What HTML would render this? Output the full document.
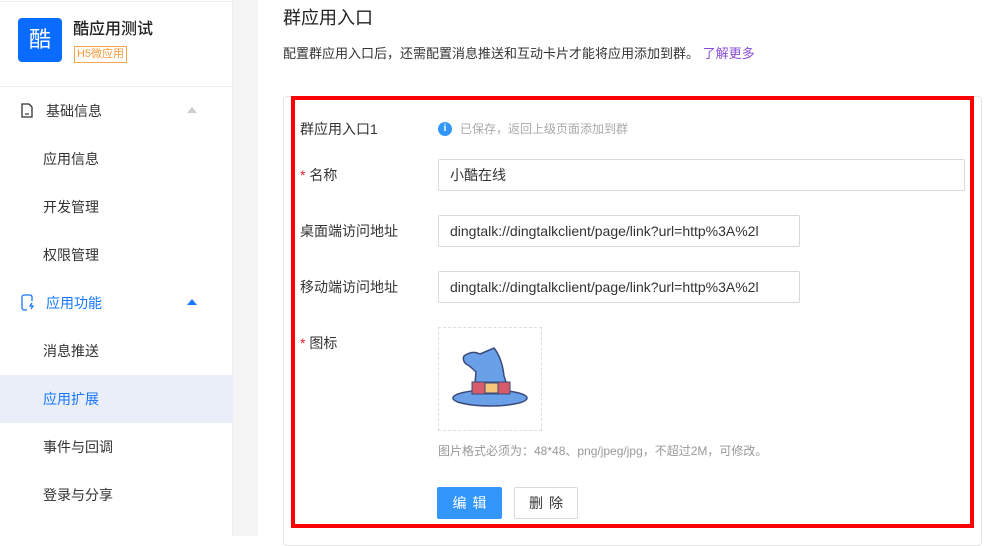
<!DOCTYPE html>
<html><head><meta charset="utf-8"><style>
*{margin:0;padding:0;box-sizing:border-box}
body{width:1005px;height:536px;overflow:hidden;background:#fff;font-family:"Liberation Sans","Noto Sans CJK SC",sans-serif;color:#333;position:relative}
.a{position:absolute}
.side{left:0;top:0;width:233px;height:536px;background:#fff;border-right:1px solid #eee}
.gap{left:233px;top:0;width:25px;height:536px;background:#f5f5f6}
.mi{left:43px;font-size:14px;color:#333;line-height:16px}
.inp{border:1px solid #d9d9d9;border-radius:2px;height:32px;font-size:14px;color:#333;padding-left:11px;line-height:30px;white-space:nowrap;overflow:hidden}
.lab{left:300px;font-size:14px;color:#333;line-height:16px}
.req{color:#f5222d}
</style></head><body>
<div class="a side"></div>
<div class="a gap"></div>
<div class="a" style="left:0;top:1px;width:233px;height:1px;background:#eee"></div>
<div class="a" style="left:0;top:86px;width:233px;height:1px;background:#eee"></div>
<div class="a" style="left:18px;top:18px;width:44px;height:44px;background:#0a6cff;border-radius:4px;color:#fff;font-size:22px;text-align:center;line-height:44px">酷</div>
<div class="a" style="left:73px;top:20px;font-size:16px;color:#222;font-weight:500;line-height:20px">酷应用测试</div>
<div class="a" style="left:74px;top:46px;width:53px;height:17px;border:1px solid #f5a54a;color:#f29a3b;font-size:11px;line-height:15px;text-align:center">H5微应用</div>

<svg class="a" style="left:21px;top:103px" width="12" height="15" viewBox="0 0 12 15"><path d="M1 1h7l3 3v10H1z" fill="none" stroke="#333" stroke-width="1.3"/><path d="M4 11h4" stroke="#333" stroke-width="1.2"/></svg>
<div class="a mi" style="left:46px;top:103px">基础信息</div>
<div class="a" style="left:187px;top:107px;width:0;height:0;border-left:5px solid transparent;border-right:5px solid transparent;border-bottom:6px solid #ccc"></div>
<div class="a mi" style="top:151px">应用信息</div>
<div class="a mi" style="top:199px">开发管理</div>
<div class="a mi" style="top:247px">权限管理</div>
<svg class="a" style="left:21px;top:294px" width="14" height="17" viewBox="0 0 14 17"><path d="M9 1H3a2 2 0 0 0-2 2v11a2 2 0 0 0 2 2h3M11 7V3a2 2 0 0 0-2-2" fill="none" stroke="#1677ff" stroke-width="1.3"/><path d="M11 9l-2 3h3l-2 3" fill="none" stroke="#1677ff" stroke-width="1.3"/></svg>
<div class="a mi" style="left:46px;top:295px;color:#1677ff">应用功能</div>
<div class="a" style="left:187px;top:299px;width:0;height:0;border-left:5px solid transparent;border-right:5px solid transparent;border-bottom:6px solid #1677ff"></div>
<div class="a mi" style="top:343px">消息推送</div>
<div class="a" style="left:0;top:375px;width:233px;height:48px;background:#e9eef9"></div>
<div class="a mi" style="top:391px;color:#1677ff">应用扩展</div>
<div class="a mi" style="top:439px">事件与回调</div>
<div class="a mi" style="top:487px">登录与分享</div>

<div class="a" style="left:283px;top:7px;font-size:18px;color:#222;line-height:22px">群应用入口</div>
<div class="a" style="left:283px;top:46px;font-size:13px;color:#333;line-height:16px">配置群应用入口后，还需配置消息推送和互动卡片才能将应用添加到群。 <span style="color:#8a4fd6">了解更多</span></div>

<div class="a" style="left:283px;top:96px;width:699px;height:450px;border:1px solid #e5e5e5;border-radius:4px"></div>
<div class="a" style="left:291px;top:96px;width:683px;height:432px;border:4px solid #ff0000"></div>

<div class="a lab" style="top:121px">群应用入口1</div>
<div class="a" style="left:438px;top:122px;width:14px;height:14px;border-radius:50%;background:#3296fa;color:#fff;font-size:10px;text-align:center;line-height:14px;font-weight:bold">i</div>
<div class="a" style="left:460px;top:121px;font-size:12px;color:#aaa;line-height:16px">已保存，返回上级页面添加到群</div>
<div class="a lab" style="top:167px"><span class="req">*</span> 名称</div>
<div class="a inp" style="left:438px;top:159px;width:527px">小酷在线</div>
<div class="a lab" style="top:223px">桌面端访问地址</div>
<div class="a inp" style="left:438px;top:215px;width:362px">dingtalk://dingtalkclient/page/link?url=http%3A%2l</div>
<div class="a lab" style="top:279px">移动端访问地址</div>
<div class="a inp" style="left:438px;top:271px;width:362px">dingtalk://dingtalkclient/page/link?url=http%3A%2l</div>
<div class="a lab" style="top:335px"><span class="req">*</span> 图标</div>
<div class="a" style="left:438px;top:327px;width:104px;height:104px;border:1px dashed #ddd"></div>
<svg class="a" style="left:452px;top:346px" width="78" height="66" viewBox="0 0 78 66">
<path d="M12 10 Q20 4 28 8 L42 2 Q50 12 52 30 L58 48 L22 48 L24 26 Q18 20 14 18 Q10 14 12 10Z" fill="#6aa0e8" stroke="#3a4a7a" stroke-width="1.5"/>
<ellipse cx="38" cy="52" rx="37" ry="8" fill="#6aa0e8" stroke="#3a4a7a" stroke-width="1.5"/>
<rect x="20" y="36" width="38" height="12" fill="#d95a6a" stroke="#3a4a7a" stroke-width="1"/>
<rect x="33" y="37" width="13" height="10" fill="#f5c57a" stroke="#3a4a7a" stroke-width="1"/>
</svg>
<div class="a" style="left:438px;top:443px;font-size:12px;color:#999;line-height:16px">图片格式必须为：48*48、png/jpeg/jpg，不超过2M，可修改。</div>
<div class="a" style="left:437px;top:487px;width:65px;height:32px;background:#3296fa;border-radius:2px;color:#fff;font-size:14px;text-align:center;line-height:32px;letter-spacing:6px;padding-left:6px">编辑</div>
<div class="a" style="left:514px;top:487px;width:64px;height:32px;border:1px solid #d9d9d9;border-radius:2px;color:#333;font-size:14px;text-align:center;line-height:30px;letter-spacing:6px;padding-left:6px">删除</div>
</body></html>
